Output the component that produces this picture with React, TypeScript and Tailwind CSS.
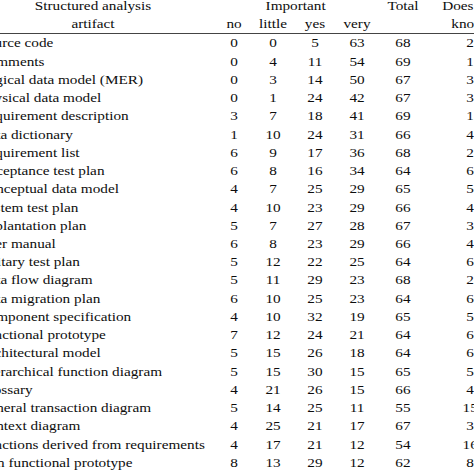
const rows: [string, number, number, number, number, number, number][] = [
  ["Source code", 0, 0, 5, 63, 68, 2],
  ["Comments", 0, 4, 11, 54, 69, 1],
  ["Logical data model (MER)", 0, 3, 14, 50, 67, 3],
  ["Physical data model", 0, 1, 24, 42, 67, 3],
  ["Requirement description", 3, 7, 18, 41, 69, 1],
  ["Data dictionary", 1, 10, 24, 31, 66, 4],
  ["Requirement list", 6, 9, 17, 36, 68, 2],
  ["Acceptance test plan", 6, 8, 16, 34, 64, 6],
  ["Conceptual data model", 4, 7, 25, 29, 65, 5],
  ["System test plan", 4, 10, 23, 29, 66, 4],
  ["Implantation plan", 5, 7, 27, 28, 67, 3],
  ["User manual", 6, 8, 23, 29, 66, 4],
  ["Unitary test plan", 5, 12, 22, 25, 64, 6],
  ["Data flow diagram", 5, 11, 29, 23, 68, 2],
  ["Data migration plan", 6, 10, 25, 23, 64, 6],
  ["Component specification", 4, 10, 32, 19, 65, 5],
  ["Functional prototype", 7, 12, 24, 21, 64, 6],
  ["Architectural model", 5, 15, 26, 18, 64, 6],
  ["Hierarchical function diagram", 5, 15, 30, 15, 65, 5],
  ["Glossary", 4, 21, 26, 15, 66, 4],
  ["General transaction diagram", 5, 14, 25, 11, 55, 15],
  ["Context diagram", 4, 25, 21, 17, 67, 3],
  ["Functions derived from requirements", 4, 17, 21, 12, 54, 16],
  ["Non functional prototype", 8, 13, 29, 12, 62, 8],
];

// the scan is stretched sideways, so the table is drawn narrow and scaled on x
const cols = "grid grid-cols-[186px_30.7px_30.7px_35.3px_30.9px_41.5px_70.3px]";

export default function App() {
  return (
    <div className="h-screen w-screen overflow-hidden bg-white font-['Liberation_Serif',serif] text-[12px] text-[#0d0d0d]">
      <div className="w-[400px] origin-top-left scale-x-[1.27]">
        <div className={`${cols} ml-[-17px] mt-[-3.2px] w-[425.4px] leading-[18.3px]`}>
          <div className="whitespace-nowrap pr-[5.6px] text-center">Structured analysis</div>
          <div className="col-span-4 text-center">Important</div>
          <div className="text-center">Total</div>
          <div className="whitespace-nowrap pr-[7px] text-center">Does not</div>

          <div className="pr-[5.6px] text-center">artifact</div>
          <div className="text-center">no</div>
          <div className="text-center">little</div>
          <div className="text-center">yes</div>
          <div className="text-center">very</div>
          <div />
          <div className="pr-[9px] text-center">know</div>

          <div className="col-span-7 h-px bg-[#444]" />
        </div>

        <div className={`${cols} ml-[-17px] w-[425.4px] leading-[18.23px]`}>
          {rows.map(([label, ...nums]) => (
            <div key={label} className="contents">
              <div className="whitespace-nowrap">{label}</div>
              {nums.map((n, i) => (
                <div key={i} className={i === 5 ? "pr-[6px] text-center" : "text-center"}>
                  {n}
                </div>
              ))}
            </div>
          ))}
        </div>
      </div>
    </div>
  );
}
